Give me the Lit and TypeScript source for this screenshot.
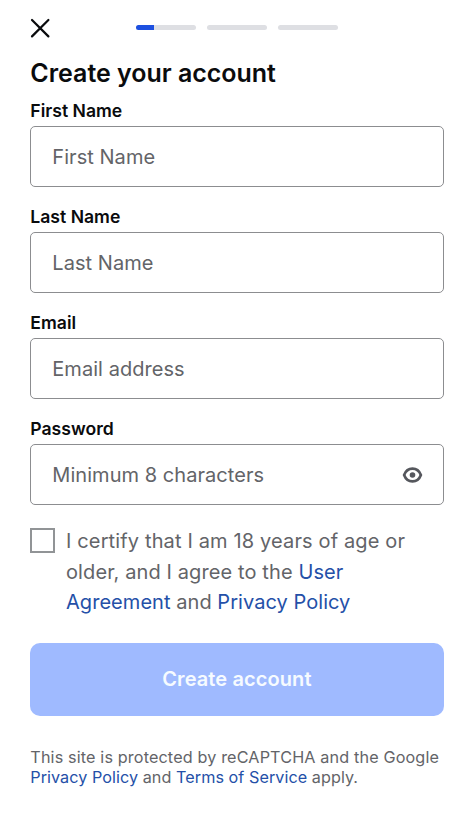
import { LitElement, html, css } from "lit";
import { customElement, property } from "lit/decorators.js";

@customElement("step-progress")
class StepProgress extends LitElement {
  @property({ type: Array }) steps: number[] = [];

  static styles = css`
    :host {
      display: flex;
      gap: 10.5px;
    }
    .step {
      width: 60.3px;
      height: 5px;
      border-radius: 3px;
      background: #dedfe3;
      overflow: hidden;
    }
    .fill {
      height: 100%;
      background: #1d50e0;
    }
  `;

  render() {
    return this.steps.map(
      (value) => html`<div class="step"><div class="fill" style="width:${value}%"></div></div>`
    );
  }
}

@customElement("form-field")
class FormField extends LitElement {
  @property() label = "";
  @property() placeholder = "";
  @property() type = "text";

  static styles = css`
    :host {
      display: block;
      height: 106.1px;
    }
    .label {
      display: block;
      height: 30px;
      font-size: 17.6px;
      font-weight: 600;
      line-height: 30.4px;
      color: #0a0b0d;
    }
    .box {
      display: flex;
      align-items: center;
      box-sizing: border-box;
      height: 61px;
      padding: 0 20px 0 21px;
      border: 1px solid #8c8d90;
      border-radius: 5px;
    }
    .input {
      flex: 1;
      min-width: 0;
      height: 25px;
      padding: 0;
      border: 0;
      outline: 0;
      background: none;
      font: inherit;
      font-size: 20px;
      letter-spacing: 0.05px;
      color: #0a0b0d;
    }
    .input::placeholder {
      color: #636468;
      opacity: 1;
    }
    .eye {
      display: block;
      width: 21px;
      height: 18px;
    }
  `;

  render() {
    return html`
      <label class="label" for="control">${this.label}</label>
      <div class="box">
        <input class="input" id="control" type=${this.type} placeholder=${this.placeholder} />
        ${this.type === "password"
          ? html`<svg class="eye" viewBox="0 0 21 18" fill="none">
              <path
                d="M2.1 9C3.6 5 6.5 2.6 10.5 2.6S17.4 5 18.9 9C17.4 13 14.5 15.4 10.5 15.4S3.6 13 2.1 9Z"
                stroke="#55575d"
                stroke-width="2.7"
                stroke-linejoin="round"
              />
              <circle cx="10.5" cy="9" r="2.8" fill="#55575d" />
            </svg>`
          : null}
      </div>
    `;
  }
}

@customElement("app-root")
class AppRoot extends LitElement {
  static styles = css`
    :host {
      display: block;
      box-sizing: border-box;
      height: 817px;
      padding: 18px 30.5px 0 30.3px;
      overflow: hidden;
      background: #fff;
      font-family: Inter, "Liberation Sans", sans-serif;
      color: #636468;
    }
    .top {
      display: grid;
      grid-template-columns: 20px auto 20px;
      justify-content: space-between;
      align-items: center;
      height: 20px;
    }
    .close {
      display: block;
      width: 20px;
      height: 20px;
    }
    .bars {
      margin-bottom: 1px;
    }
    .title {
      margin: 18px 0 6.15px;
      font-size: 25px;
      font-weight: 600;
      line-height: 34px;
      letter-spacing: -0.02px;
      color: #0a0b0d;
    }
    .consent {
      display: flex;
      gap: 10.7px;
      margin-top: 5.25px;
    }
    .check {
      flex: none;
      appearance: none;
      box-sizing: border-box;
      width: 25px;
      height: 25px;
      margin: 2.3px 0 0;
      border: 2px solid #919496;
      background: #fff;
    }
    .terms {
      margin-top: 0.6px;
      font-size: 20px;
      line-height: 30.4px;
      white-space: nowrap;
    }
    .line {
      display: block;
    }
    .wide {
      letter-spacing: 0.14px;
    }
    .medium {
      letter-spacing: 0.11px;
    }
    .narrow {
      letter-spacing: 0.05px;
    }
    .link {
      color: #2450a8;
      text-decoration: none;
    }
    .submit {
      display: block;
      width: 100%;
      height: 73px;
      margin: 25px 0 31px;
      padding: 0;
      border: 0;
      border-radius: 10px;
      background: #9fbaff;
      font: inherit;
      font-size: 20px;
      font-weight: 600;
      letter-spacing: 0.1px;
      color: #f6fbff;
    }
    .legal {
      font-size: 16.2px;
      line-height: 20px;
      white-space: nowrap;
    }
  `;

  render() {
    return html`
      <div class="top">
        <svg class="close" viewBox="0 0 20 20" fill="none">
          <path d="M2 2L18.4 18.4M18.4 2L2 18.4" stroke="#0a0b0d" stroke-width="2.2" stroke-linecap="round" />
        </svg>
        <step-progress class="bars" .steps=${[30, 0, 0]}></step-progress>
      </div>
      <h1 class="title">Create your account</h1>
      <form-field label="First Name" placeholder="First Name"></form-field>
      <form-field label="Last Name" placeholder="Last Name"></form-field>
      <form-field label="Email" placeholder="Email address"></form-field>
      <form-field label="Password" placeholder="Minimum 8 characters" type="password"></form-field>
      <div class="consent">
        <input class="check" type="checkbox" aria-label="I certify" />
        <div class="terms">
          <span class="line wide">I certify that I am 18 years of age or</span>
          <span class="line medium">older, and I agree to the <a class="link">User</a></span>
          <span class="line narrow"><a class="link">Agreement</a> and <a class="link">Privacy Policy</a></span>
        </div>
      </div>
      <button class="submit">Create account</button>
      <div class="legal">
        <span class="line wide">This site is protected by reCAPTCHA and the Google</span>
        <span class="line narrow"
          ><a class="link">Privacy Policy</a> and <a class="link">Terms of Service</a> apply.</span
        >
      </div>
    `;
  }
}
